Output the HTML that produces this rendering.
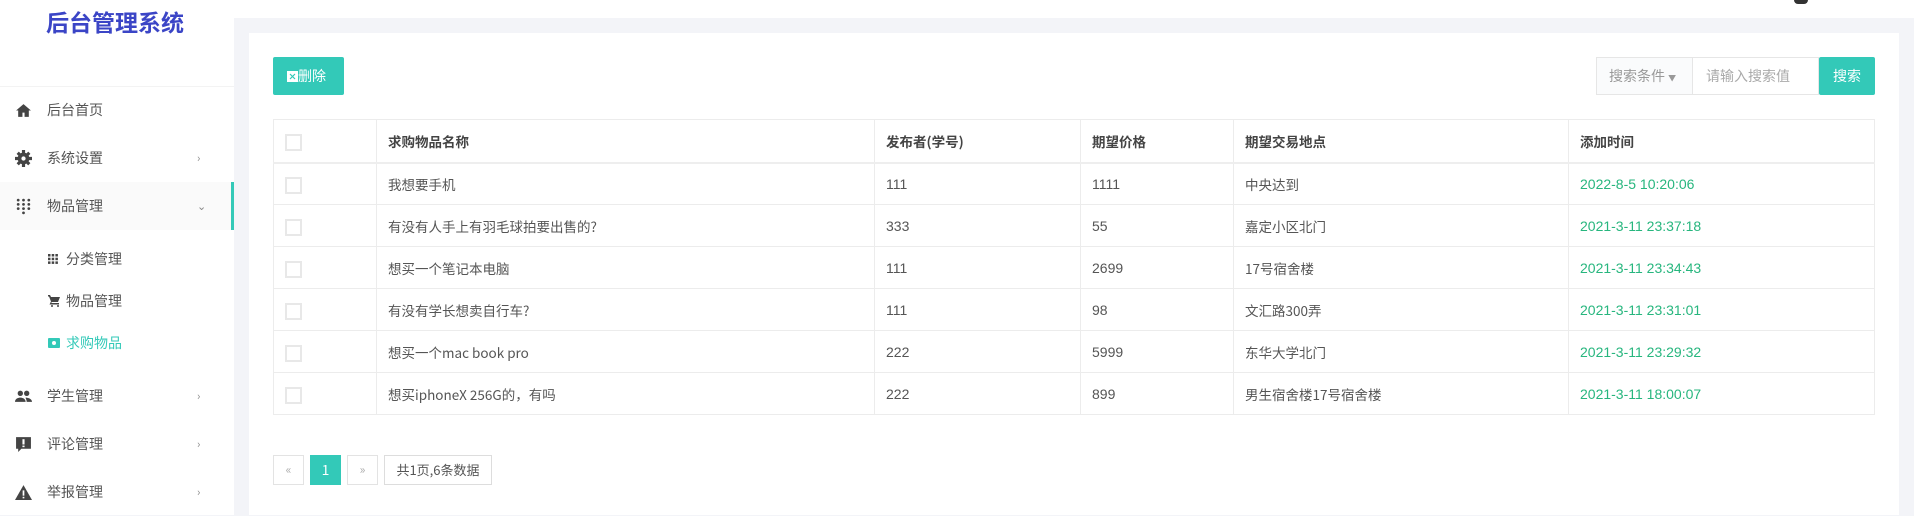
<!DOCTYPE html>
<html><head><meta charset="utf-8"><style>
*{box-sizing:border-box;margin:0;padding:0}
body{width:1914px;height:515px;overflow:hidden;background:#f3f4f8;font-family:"Noto Sans CJK SC","Liberation Sans",sans-serif;font-size:14px;color:#555;position:relative}
.side{position:absolute;left:0;top:0;width:234px;height:515px;background:#fff}
.title{position:absolute;left:46px;top:4px;font-size:23px;line-height:34px;font-weight:bold;color:#3b45c6}
.sep{position:absolute;left:0;top:86px;width:234px;border-top:1px solid #f3f3f3}
.mi{position:absolute;left:0;width:234px;height:48px;line-height:48px;font-size:14px;color:#555}
.mi .ic{position:absolute;left:15px;top:16px;width:17px;height:17px}
.mi .t{position:absolute;left:47px}
.mi .ar{position:absolute;left:197px;font-size:11px;color:#888}
.sub{position:absolute;left:48px;font-size:14px;color:#555;height:20px;line-height:20px}
.sub .t{position:absolute;left:18px;white-space:nowrap}
.hdr{position:absolute;left:234px;top:0;width:1680px;height:18px;background:#fff}
.card{position:absolute;left:249px;top:33px;width:1650px;height:482px;background:#fff}
.btn{position:absolute;background:#33c9b8;color:#fff;border-radius:2px;font-size:14px;white-space:nowrap}
table{position:absolute;left:273px;top:119px;width:1602px;border-collapse:collapse}
td,th{border:1px solid #ececec;height:42px;text-align:left;padding-left:11px;font-size:13.5px;line-height:20px;font-weight:normal;color:#555;vertical-align:middle}
th{font-weight:bold;color:#444;height:43px;border-bottom:2px solid #eee}
.n{font-family:"Liberation Sans",sans-serif;font-size:14px}
.cb{display:inline-block;width:17px;height:17px;border:2px solid #e8e8e8;vertical-align:middle}
.g{color:#27b67e;font-family:"Liberation Sans",sans-serif;font-size:14px}
.pg{position:absolute;top:455px;height:30px;border:1px solid #e3e3e3;text-align:center;line-height:28px;color:#aaa;font-size:12px;background:#fff}
</style></head><body>
<div class="side">
<div class="title">后台管理系统</div>
<div class="sep"></div>
<div class="mi" style="top:86px"><svg class="ic" viewBox="0 0 16 16"><path d="M8 2 1 8h2v6h4v-4h2v4h4V8h2z" fill="#444"/></svg><span class="t">后台首页</span></div>
<div class="mi" style="top:134px"><svg class="ic" viewBox="0 0 16 16"><circle cx="8" cy="8" r="5.5" fill="#444"/><path d="M6.5 0h3v3h-3zM6.5 13h3v3h-3zM0 6.5h3v3H0zM13 6.5h3v3h-3zM1.5 3.6 3.6 1.5l2 2-2.1 2.1zM10.4 12.5l2.1-2.1 2 2-2.1 2.1zM12.5 1.5l2 2.1-2 2-2.1-2.1zM3.6 14.5l-2.1-2 2-2.1 2.1 2.1z" fill="#444"/><circle cx="8" cy="8" r="2" fill="#fff"/></svg><span class="t">系统设置</span><span class="ar">›</span></div>
<div class="mi" style="top:182px;background:#fafafa;border-right:3px solid #33c9b8"><svg class="ic" viewBox="0 0 16 16" fill="#444"><circle cx="3" cy="2" r="1.3"/><circle cx="8" cy="2" r="1.3"/><circle cx="13" cy="2" r="1.3"/><circle cx="3" cy="6" r="1.3"/><circle cx="8" cy="6" r="1.3"/><circle cx="13" cy="6" r="1.3"/><circle cx="3" cy="10" r="1.3"/><circle cx="8" cy="10" r="1.3"/><circle cx="13" cy="10" r="1.3"/><circle cx="8" cy="14" r="1.3"/></svg><span class="t">物品管理</span><span class="ar">⌄</span></div>
<div class="sub" style="top:249px"><svg style="position:absolute;left:0;top:5px" width="10" height="10" viewBox="0 0 10 10" fill="#444"><rect x="0" y="0" width="2.5" height="2.5"/><rect x="3.7" y="0" width="2.5" height="2.5"/><rect x="7.4" y="0" width="2.5" height="2.5"/><rect x="0" y="3.7" width="2.5" height="2.5"/><rect x="3.7" y="3.7" width="2.5" height="2.5"/><rect x="7.4" y="3.7" width="2.5" height="2.5"/><rect x="0" y="7.4" width="2.5" height="2.5"/><rect x="3.7" y="7.4" width="2.5" height="2.5"/><rect x="7.4" y="7.4" width="2.5" height="2.5"/></svg><span class="t">分类管理</span></div>
<div class="sub" style="top:291px"><svg style="position:absolute;left:0;top:4px" width="12" height="12" viewBox="0 0 12 12" fill="#444"><path d="M0 0h2l1 2h9l-2 5H4l-1 1h8v1.5H1.5L3 6.5 1 1.5H0z"/><circle cx="4" cy="11" r="1"/><circle cx="10" cy="11" r="1"/></svg><span class="t">物品管理</span></div>
<div class="sub" style="top:333px;color:#33c9b8"><svg style="position:absolute;left:0;top:5px" width="12" height="10" viewBox="0 0 12 10"><rect width="12" height="10" rx="1" fill="#33c9b8"/><circle cx="6" cy="5" r="2" fill="#fff"/></svg><span class="t">求购物品</span></div>
<div class="mi" style="top:372px"><svg class="ic" viewBox="0 0 16 16" fill="#444"><circle cx="5" cy="5" r="2.5"/><circle cx="11" cy="5" r="2.5"/><path d="M0 13c0-3 3-4 5-4s5 1 5 4zM10 9c2 0 6 1 6 4h-5c0-2-1-3-1-4z"/></svg><span class="t">学生管理</span><span class="ar">›</span></div>
<div class="mi" style="top:420px"><svg class="ic" viewBox="0 0 16 16" fill="#444"><path d="M1 1h14v11H6l-3 3v-3H1z"/><rect x="7" y="3" width="2" height="5" fill="#fff"/><rect x="7" y="9" width="2" height="1.5" fill="#fff"/></svg><span class="t">评论管理</span><span class="ar">›</span></div>
<div class="mi" style="top:468px"><svg class="ic" viewBox="0 0 16 16" fill="#444"><path d="M8 1 16 15H0z"/><rect x="7.2" y="6" width="1.6" height="5" fill="#fff"/><rect x="7.2" y="12" width="1.6" height="1.5" fill="#fff"/></svg><span class="t">举报管理</span><span class="ar">›</span></div>
</div>
<div class="hdr"><div style="position:absolute;left:1560px;top:0;width:14px;height:4px;background:#333;border-radius:0 0 4px 4px"></div></div>
<div class="card"></div>
<div class="btn" style="left:273px;top:57px;width:71px;height:38px;line-height:38px;padding-left:14px"><svg width="11" height="11" viewBox="0 0 11 11" style="vertical-align:-1px"><rect width="11" height="11" fill="#fff"/><path d="M3 3l5 5M8 3l-5 5" stroke="#33c9b8" stroke-width="1.2"/></svg>删除</div>
<div style="position:absolute;left:1596px;top:57px;width:97px;height:38px;border:1px solid #e6e6e6;background:#fafbfc;color:#999;line-height:36px;padding-left:12px;font-size:14px;white-space:nowrap">搜索条件 <span style="font-size:8px">▼</span></div>
<div style="position:absolute;left:1693px;top:57px;width:126px;height:38px;border:1px solid #e6e6e6;border-left:none;color:#aaa;line-height:36px;padding-left:13px;font-size:14px">请输入搜索值</div>
<div class="btn" style="left:1819px;top:57px;width:56px;height:38px;line-height:38px;text-align:center">搜索</div>
<table>
<tr><th style="width:103px"><span class="cb"></span></th><th style="width:498px">求购物品名称</th><th style="width:206px">发布者(学号)</th><th style="width:153px">期望价格</th><th style="width:335px">期望交易地点</th><th>添加时间</th></tr>
<tr><td><span class="cb"></span></td><td>我想要手机</td><td class="n">111</td><td class="n">1111</td><td>中央达到</td><td class="g">2022-8-5 10:20:06</td></tr>
<tr><td><span class="cb"></span></td><td>有没有人手上有羽毛球拍要出售的?</td><td class="n">333</td><td class="n">55</td><td>嘉定小区北门</td><td class="g">2021-3-11 23:37:18</td></tr>
<tr><td><span class="cb"></span></td><td>想买一个笔记本电脑</td><td class="n">111</td><td class="n">2699</td><td>17号宿舍楼</td><td class="g">2021-3-11 23:34:43</td></tr>
<tr><td><span class="cb"></span></td><td>有没有学长想卖自行车?</td><td class="n">111</td><td class="n">98</td><td>文汇路300弄</td><td class="g">2021-3-11 23:31:01</td></tr>
<tr><td><span class="cb"></span></td><td>想买一个mac book pro</td><td class="n">222</td><td class="n">5999</td><td>东华大学北门</td><td class="g">2021-3-11 23:29:32</td></tr>
<tr><td><span class="cb"></span></td><td>想买iphoneX 256G的，有吗</td><td class="n">222</td><td class="n">899</td><td>男生宿舍楼17号宿舍楼</td><td class="g">2021-3-11 18:00:07</td></tr>
</table>
<div class="pg" style="left:273px;width:31px">«</div>
<div class="pg" style="left:310px;width:31px;background:#33c9b8;border-color:#33c9b8;color:#fff;font-size:14px">1</div>
<div class="pg" style="left:347px;width:31px">»</div>
<div class="pg" style="left:384px;width:108px;color:#555;font-size:13px;border-color:#ddd">共1页,6条数据</div>
</body></html>
